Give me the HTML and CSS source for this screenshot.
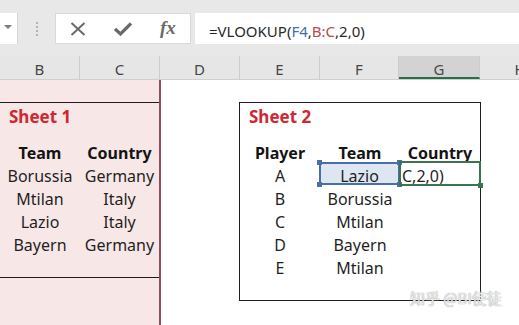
FILE: index.html
```html
<!DOCTYPE html>
<html>
<head>
<meta charset="utf-8">
<link rel="stylesheet" href="styles.css">
</head>
<body>
<div class="app">
  <div class="toolbar">
    <div class="namebox">
      <svg class="dd" width="8" height="5" viewBox="0 0 8 5"><polygon points="0,0 8,0 4,4" fill="#7a7a7a"/></svg>
    </div>
    <svg class="grip" width="4" height="14" viewBox="0 0 4 14">
      <rect x="1" y="0" width="2" height="2" fill="#b4b4b4"/>
      <rect x="1" y="4" width="2" height="2" fill="#b4b4b4"/>
      <rect x="1" y="8" width="2" height="2" fill="#b4b4b4"/>
      <rect x="1" y="12" width="2" height="2" fill="#b4b4b4"/>
    </svg>
    <div class="fbtns">
      <svg class="ico" width="16" height="14" viewBox="0 0 16 14"><path d="M1.5 1 L14.5 13 M14.5 1 L1.5 13" stroke="#6a6a6a" stroke-width="2" fill="none"/></svg>
      <svg class="ico" width="18" height="14" viewBox="0 0 18 14"><path d="M1 7 L6.5 12 L17 1.5" stroke="#6a6a6a" stroke-width="3.2" fill="none"/></svg>
      <span class="fx">fx</span>
    </div>
    <div class="finput">=VLOOKUP(<span class="ref-b">F4</span>,<span class="ref-r">B:C</span>,2,0)</div>
  </div>
  <div class="colheads">
    <div class="ch">B</div>
    <div class="ch">C</div>
    <div class="ch">D</div>
    <div class="ch">E</div>
    <div class="ch">F</div>
    <div class="ch ch-sel">G</div>
    <div class="ch ch-last">H</div>
  </div>
  <div class="grid">
    <div class="pink">
      <div class="s1">
        <div class="title">Sheet 1</div>
        <div class="tbl tbl2">
          <div class="r h">Team</div><div class="r h">Country</div>
          <div class="r">Borussia</div><div class="r">Germany</div>
          <div class="r">Mtilan</div><div class="r">Italy</div>
          <div class="r">Lazio</div><div class="r">Italy</div>
          <div class="r">Bayern</div><div class="r">Germany</div>
        </div>
      </div>
    </div>
    <div class="gap"></div>
    <div class="s2">
      <div class="title">Sheet 2</div>
      <div class="tbl tbl3">
        <div class="r h">Player</div><div class="r h">Team</div><div class="r h">Country</div>
        <div class="r">A</div>
        <div class="r sel-blue">Lazio<i class="hd tl"></i><i class="hd tr"></i><i class="hd bl"></i><i class="hd br"></i></div>
        <div class="r sel-green">C,2,0)<i class="hd gbr"></i></div>
        <div class="r">B</div><div class="r">Borussia</div><div class="r"></div>
        <div class="r">C</div><div class="r">Mtilan</div><div class="r"></div>
        <div class="r">D</div><div class="r">Bayern</div><div class="r"></div>
        <div class="r">E</div><div class="r">Mtilan</div><div class="r"></div>
      </div>
    </div>
    <div class="rest"></div>
  </div>
  <div class="wm">知乎 @BI使徒</div>
</div>
</body>
</html>
```
FILE: styles.css
```css
html, body {
  margin: 0;
  padding: 0;
}
body {
  width: 519px;
  height: 325px;
  overflow: hidden;
  background: #ffffff;
  font-family: "Noto Sans", "Noto Sans CJK SC", sans-serif;
}
.app {
  position: relative;
  width: 519px;
  height: 325px;
  overflow: hidden;
}
.toolbar {
  height: 56px;
  box-sizing: border-box;
  padding-top: 13px;
  background: #e8e8e8;
  display: flex;
  align-items: flex-start;
}
.namebox {
  width: 18px;
  height: 31px;
  background: #ffffff;
  border-right: 1px solid #d6d6d6;
  box-sizing: border-box;
  display: flex;
  align-items: center;
  padding-left: 4px;
}
.dd {
  display: block;
  margin-top: -2px;
}
.grip {
  display: block;
  margin-left: 17px;
  margin-top: 9px;
}
.fbtns {
  margin-left: 16px;
  width: 136px;
  height: 31px;
  background: #ffffff;
  box-sizing: border-box;
  border: 1px solid #d9d9d9;
  display: flex;
  align-items: center;
  padding-left: 14px;
}
.ico {
  display: block;
}
.fbtns .ico:nth-child(2) {
  margin-left: 28px;
  margin-top: 1px;
}
.fx {
  margin-left: 28px;
  font-family: "Liberation Serif", serif;
  font-style: italic;
  font-weight: 700;
  font-size: 19px;
  color: #6a6a6a;
  line-height: 20px;
  margin-top: -2px;
}
.finput {
  margin-left: 4px;
  flex: 1;
  height: 31px;
  background: #ffffff;
  box-sizing: border-box;
  padding-left: 14px;
  padding-top: 5px;
  line-height: 26px;
  font-size: 15px;
  color: #2a2a2a;
  white-space: nowrap;
}
.ref-b { color: #3f6fb4; }
.ref-r { color: #b84a4a; }

.colheads {
  height: 24px;
  box-sizing: border-box;
  background: #e6e6e6;
  border-bottom: 1px solid #cfcfcf;
  display: grid;
  grid-template-columns: 80px 80px 80px 80px 79px 81px 80px;
}
.ch {
  box-sizing: border-box;
  height: 23px;
  border-right: 1px solid #cdcdcd;
  text-align: center;
  font-size: 15px;
  line-height: 23px;
  padding-top: 2px;
  color: #454545;
}
.ch-sel {
  background: #d3d3d3;
  border-bottom: 2px solid #217346;
  color: #4a4a4a;
}
.ch-last {
  border-right: none;
}

.grid {
  display: grid;
  grid-template-columns: 161px 78px 242px 1fr;
  height: 245px;
}
.pink {
  background: #f8e7e7;
  border-right: 2px solid #8f4e5e;
  padding-top: 22px;
  box-sizing: border-box;
}
.s1 {
  border-top: 1px solid #1e1e1e;
  border-bottom: 1px solid #1e1e1e;
  height: 176px;
  box-sizing: border-box;
}
.title {
  height: 24px;
  box-sizing: border-box;
  padding-left: 9px;
  padding-top: 5px;
  line-height: 17px;
  font-size: 17px;
  font-weight: 700;
  color: #d02630;
}
.tbl {
  margin-top: 12px;
  display: grid;
  grid-auto-rows: 23px;
}
.tbl2 {
  grid-template-columns: 80px 79px;
}
.tbl3 {
  grid-template-columns: 80px 80px 80px;
}
.r {
  position: relative;
  box-sizing: border-box;
  height: 23px;
  padding-top: 6px;
  line-height: 16px;
  font-size: 16px;
  text-align: center;
  color: #1f1f1f;
  white-space: nowrap;
}
.h {
  font-weight: 700;
  color: #141414;
}
.s2 {
  margin-top: 22px;
  height: 199px;
  box-sizing: border-box;
  border: 1px solid #1e1e1e;
}
.sel-blue {
  background: #dde6f2;
  outline: 2px solid #4a6ea6;
  outline-offset: -2px;
  margin-left: -1px;
}
.sel-green {
  outline: 2px solid #3b7450;
  outline-offset: -1px;
  text-align: left;
  padding-left: 2px;
}
.hd {
  position: absolute;
  width: 5px;
  height: 5px;
  background: #4a6ea6;
}
.tl { left: -2px; top: -2px; }
.tr { right: -2px; top: -2px; }
.bl { left: -2px; bottom: -2px; }
.br { right: -2px; bottom: -2px; }
.gbr {
  right: -3px;
  bottom: -3px;
  background: #3b7450;
}
.wm {
  position: absolute;
  left: 410px;
  top: 288px;
  font-family: "Noto Sans CJK SC", sans-serif;
  font-size: 15px;
  line-height: 20px;
  color: rgba(255, 255, 255, 0.75);
  text-shadow: 0 0 1px #a8a8a8, 0 0 1px #a8a8a8;
  white-space: nowrap;
}
```
